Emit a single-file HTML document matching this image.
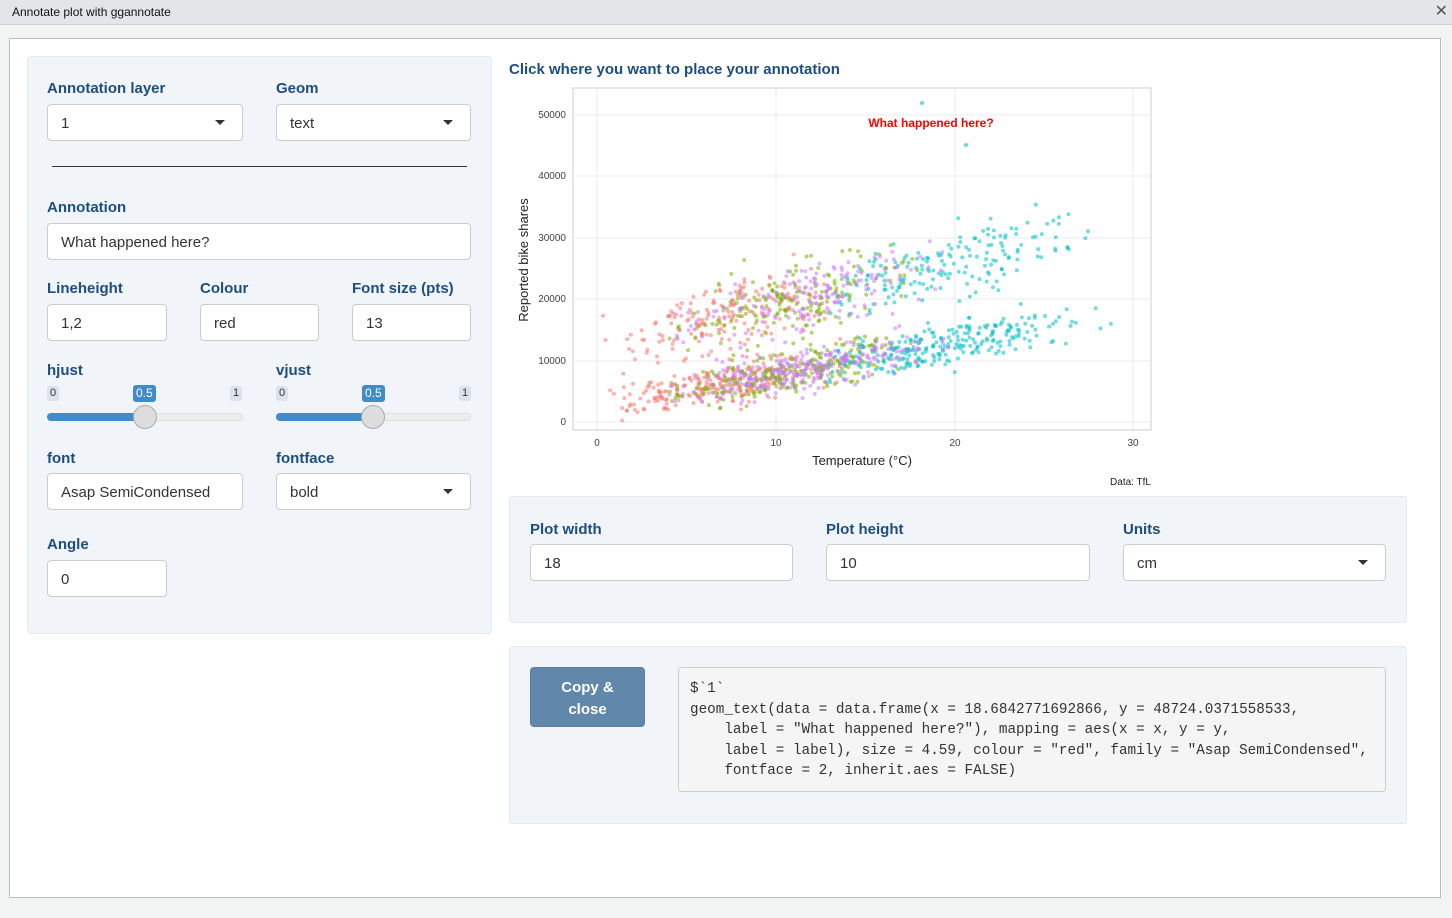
<!DOCTYPE html>
<html><head><meta charset="utf-8">
<style>
*{box-sizing:border-box}
body{margin:0;width:1452px;height:918px;background:#f2f3f3;font-family:"Liberation Sans",sans-serif;position:relative;overflow:hidden;color:#333}
.bar{position:absolute;left:0;top:0;width:1452px;height:25px;background:#e4e5e8;border-bottom:1px solid #d0d0d0;font-size:12px;padding:5px 12px;color:#111}
.x{position:absolute;right:4px;top:1px;font-size:16px;color:#555}
.main{position:absolute;left:9px;top:38px;width:1432px;height:860px;background:#fff;border:1px solid #bbb}
.well{position:absolute;background:#f1f4f8;border:1px solid #e5e9ef;border-radius:4px}
.lbl{position:absolute;font-size:15px;font-weight:bold;color:#1c4e80;margin-top:1px}
.inp{position:absolute;height:37px;background:#fff;border:1px solid #ccc;border-radius:4px;font-size:15px;padding:10px 13px;color:#333}
.sel::after{content:"";position:absolute;right:17px;top:15px;border-left:5px solid transparent;border-right:5px solid transparent;border-top:5px solid #333}
.tick{position:absolute;font-size:11px;background:#dde2e8;color:#333;border-radius:3px;padding:1px 3px;line-height:13px}
.val{position:absolute;font-size:12px;background:#428bca;color:#fff;border-radius:3px;padding:1px 3px;line-height:15px}
.track{position:absolute;height:8px;border-radius:4px;background:#eee;border:1px solid #ddd}
.fill{position:absolute;height:8px;border-radius:4px 0 0 4px;background:#428bca}
.knob{position:absolute;width:24px;height:24px;border-radius:50%;background:#ddd;border:1px solid #aaa}
pre{margin:0}
</style></head><body>
<div class="bar">Annotate plot with ggannotate<span class="x">✕</span></div>
<div class="main"></div>
<div class="well" style="left:27px;top:56px;width:465px;height:578px"></div>
<div class="lbl" style="left:47px;top:79px">Annotation layer</div>
<div class="lbl" style="left:276px;top:79px">Geom</div>
<div class="inp sel" style="left:47px;top:104px;width:196px">1</div>
<div class="inp sel" style="left:276px;top:104px;width:195px">text</div>
<div style="position:absolute;left:52px;top:166px;width:415px;height:1px;background:#333"></div>
<div class="lbl" style="left:47px;top:198px">Annotation</div>
<div class="inp" style="left:47px;top:223px;width:424px">What happened here?</div>
<div class="lbl" style="left:47px;top:279px">Lineheight</div>
<div class="lbl" style="left:200px;top:279px">Colour</div>
<div class="lbl" style="left:352px;top:279px">Font size (pts)</div>
<div class="inp" style="left:47px;top:304px;width:120px">1,2</div>
<div class="inp" style="left:200px;top:304px;width:119px">red</div>
<div class="inp" style="left:352px;top:304px;width:119px">13</div>
<div class="lbl" style="left:47px;top:361px">hjust</div>
<div class="lbl" style="left:276px;top:361px">vjust</div>
<div class="tick" style="left:47px;top:386px">0</div><div class="val" style="left:133px;top:385px">0.5</div><div class="tick" style="left:230px;top:386px">1</div>
<div class="track" style="left:47px;top:413px;width:196px"></div><div class="fill" style="left:47px;top:413px;width:98px"></div><div class="knob" style="left:133px;top:405px"></div>
<div class="tick" style="left:276px;top:386px">0</div><div class="val" style="left:362px;top:385px">0.5</div><div class="tick" style="left:459px;top:386px">1</div>
<div class="track" style="left:276px;top:413px;width:195px"></div><div class="fill" style="left:276px;top:413px;width:98px"></div><div class="knob" style="left:361px;top:405px"></div>
<div class="lbl" style="left:47px;top:449px">font</div>
<div class="lbl" style="left:276px;top:449px">fontface</div>
<div class="inp" style="left:47px;top:473px;width:196px">Asap SemiCondensed</div>
<div class="inp sel" style="left:276px;top:473px;width:195px">bold</div>
<div class="lbl" style="left:47px;top:535px">Angle</div>
<div class="inp" style="left:47px;top:560px;width:120px">0</div>

<div class="lbl" style="left:509px;top:60px">Click where you want to place your annotation</div>
<svg id="plot" style="position:absolute;left:509px;top:84px" width="650" height="410" font-family="Liberation Sans, sans-serif">
<g transform="translate(-509,-84)">
<rect x="573" y="88" width="578" height="342" fill="#fff" stroke="#ccc"/>
<g stroke="#ebebeb" stroke-width="1">
<line x1="597" y1="88" x2="597" y2="430"/><line x1="776" y1="88" x2="776" y2="430"/><line x1="955" y1="88" x2="955" y2="430"/><line x1="1133" y1="88" x2="1133" y2="430"/>
<line x1="573" y1="422" x2="1151" y2="422"/><line x1="573" y1="361" x2="1151" y2="361"/><line x1="573" y1="299" x2="1151" y2="299"/><line x1="573" y1="238" x2="1151" y2="238"/><line x1="573" y1="176" x2="1151" y2="176"/><line x1="573" y1="115" x2="1151" y2="115"/>
</g>
<g font-size="10" fill="#444" text-anchor="end">
<text x="566" y="425">0</text><text x="566" y="364">10000</text><text x="566" y="302">20000</text><text x="566" y="241">30000</text><text x="566" y="179">40000</text><text x="566" y="118">50000</text>
</g>
<g font-size="10" fill="#444" text-anchor="middle">
<text x="597" y="446">0</text><text x="776" y="446">10</text><text x="955" y="446">20</text><text x="1133" y="446">30</text>
</g>
<g id="dots"></g>
<text x="931" y="127" font-size="12" font-weight="bold" fill="#f00" text-anchor="middle">What happened here?</text>
<text x="862" y="465" font-size="13" fill="#222" text-anchor="middle">Temperature (°C)</text>
<text transform="translate(528,260) rotate(-90)" font-size="13" fill="#222" text-anchor="middle">Reported bike shares</text>
<text x="1151" y="485" font-size="10" fill="#222" text-anchor="end">Data: TfL</text>
<text x="1174" y="223" font-size="13" fill="#222">Season:</text>
<g font-size="10" fill="#222">
<circle cx="1184" cy="242" r="2.5" fill="#F8766D" opacity=".6"/><text x="1201" y="246">winter</text>
<circle cx="1184" cy="261" r="2.5" fill="#7CAE00" opacity=".6"/><text x="1201" y="265">spring</text>
<circle cx="1184" cy="280" r="2.5" fill="#00BFC4" opacity=".6"/><text x="1201" y="284">summer</text>
<circle cx="1184" cy="299" r="2.5" fill="#C77CFF" opacity=".6"/><text x="1201" y="303">autumn</text>
</g>
</g></svg>

<div class="well" style="left:509px;top:496px;width:898px;height:127px"></div>
<div class="lbl" style="left:530px;top:520px">Plot width</div>
<div class="lbl" style="left:826px;top:520px">Plot height</div>
<div class="lbl" style="left:1123px;top:520px">Units</div>
<div class="inp" style="left:530px;top:544px;width:263px">18</div>
<div class="inp" style="left:826px;top:544px;width:264px">10</div>
<div class="inp sel" style="left:1123px;top:544px;width:263px">cm</div>

<div class="well" style="left:509px;top:646px;width:898px;height:178px"></div>
<div style="position:absolute;left:530px;top:667px;width:115px;height:60px;background:#6187ab;border:1px solid #5a7fa3;border-radius:4px;color:#fff;font-weight:bold;font-size:15px;text-align:center;padding-top:9px;line-height:22px">Copy &amp;<br>close</div>
<div style="position:absolute;left:678px;top:667px;width:708px;height:125px;background:#f5f5f5;border:1px solid #ccc;border-radius:4px;padding:11px 11px">
<pre style="font-family:'Liberation Mono',monospace;font-size:14.3px;line-height:20.5px;color:#333">$`1`
geom_text(data = data.frame(x = 18.6842771692866, y = 48724.0371558533,
    label = "What happened here?"), mapping = aes(x = x, y = y,
    label = label), size = 4.59, colour = "red", family = "Asap SemiCondensed",
    fontface = 2, inherit.aes = FALSE)</pre></div>

<script>
(function(){
var s=987654321;function r(){s^=s<<13;s>>>=0;s^=s>>>17;s^=s<<5;s>>>=0;return s/4294967296;}
function g(){return (r()+r()+r()+r()-2)/2;}
var cols=["#F8766D","#7CAE00","#00BFC4","#C77CFF"];
var ranges=[[0,14],[4,18],[11,30],[4,20]];
var out=[];
function X(t){return 597+t*17.9;}function Y(v){return 422-v*0.00614;}
for(var k=0;k<4;k++){
 for(var i=0;i<430;i++){
  var a=ranges[k][0],b=ranges[k][1];
  var t=a+(b-a)*(0.5+g()*0.75);
  if(k==2) t=a+(b-a)*(0.1+0.5*r()+0.4*r()*r());
  if(t<a)t=a+r()*2;if(t>b)t=b-r()*2;
  var upper=r()<0.4;
  var v;
  if(upper) v=12000+t*700+g()*9000;
  else v=2500+t*520+g()*6000;
  if(v<0)v=200+r()*800;
  out.push('<circle cx="'+X(t).toFixed(1)+'" cy="'+Y(v).toFixed(1)+'" r="2" fill="'+cols[k]+'" fill-opacity="0.55"/>');
 }
}
out.push('<circle cx="922" cy="103" r="2" fill="#00BFC4" fill-opacity="0.6"/><circle cx="966" cy="145" r="2" fill="#00BFC4" fill-opacity="0.6"/>');
document.getElementById("dots").innerHTML=out.join("");
})();
</script>
</body></html>
